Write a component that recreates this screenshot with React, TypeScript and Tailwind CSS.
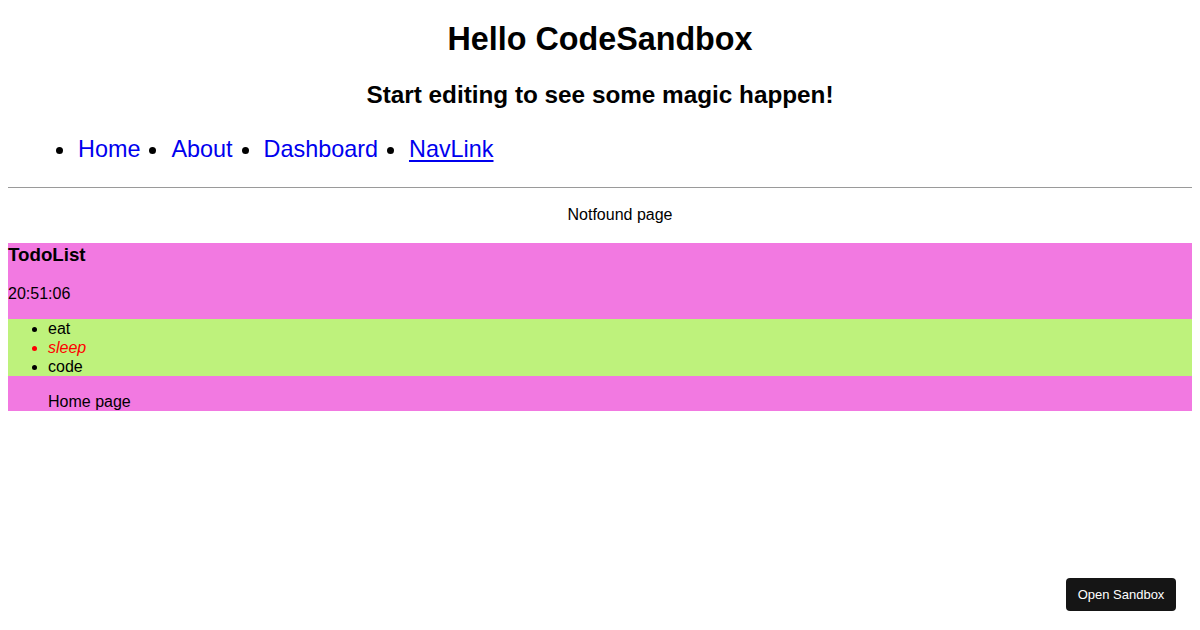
const navLinks = [
  { label: "Home", active: false },
  { label: "About", active: false },
  { label: "Dashboard", active: false },
  { label: "NavLink", active: true },
];

const todos = [
  { text: "eat", done: false },
  { text: "sleep", done: true },
  { text: "code", done: false },
];

export default function App() {
  return (
    <div className="min-h-[630px] bg-white px-2 text-black font-['Liberation_Sans',Arial,sans-serif]">
      <div className="h-[21px]" />
      <h1 className="text-center text-[32.3px] font-bold leading-[37px]">Hello CodeSandbox</h1>
      <h2 className="mt-[23px] text-center text-[24.3px] font-bold leading-[28px]">
        Start editing to see some magic happen!
      </h2>

      {/* nav */}
      <ul className="mt-[26px] flex h-[28px] items-center pl-[48px] text-[23.4px] leading-[28px]">
        {navLinks.map((l, i) => (
          <li key={l.label} className={`flex items-center ${i > 0 ? "ml-[9px]" : ""}`}>
            <span className="mt-[3px] inline-block h-[7px] w-[7px] rounded-full bg-black" />
            <a
              href="#"
              className={`ml-[15px] text-[#0000ee] ${l.active ? "underline underline-offset-[3px]" : "no-underline"}`}
            >
              {l.label}
            </a>
          </li>
        ))}
      </ul>

      <hr className="mt-[24px] border-0 border-t border-[#9a9a9a]" />

      <div className="mt-[18px] pl-10 text-center text-[16px] leading-[18px]">Notfound page</div>

      <div className="mt-[19px] bg-[#f279e1] pt-[1px]">
        <h3 className="text-[18.72px] font-bold leading-[22px]">TodoList</h3>
        <p className="mt-[19px] pb-[16px] text-[16px] leading-[18px]">20:51:06</p>
      </div>

      <ul className="list-disc bg-[#bef27c] pl-10 text-[16px] leading-[19px]">
        {todos.map((t) => (
          <li key={t.text} className={t.done ? "italic text-[#ff0000]" : ""}>
            {t.text}
          </li>
        ))}
      </ul>

      <div className="bg-[#f279e1] pl-10 pt-4 text-[16px] leading-[19px]">Home page</div>

      <button className="fixed bottom-[19px] right-[24px] h-[33px] w-[110px] rounded-[4px] bg-[#151515] text-[13px] text-white">
        Open Sandbox
      </button>
    </div>
  );
}
